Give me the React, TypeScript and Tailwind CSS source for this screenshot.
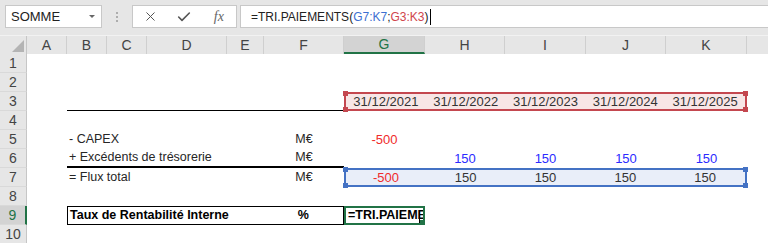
import { X, Check } from "lucide-react";

const headers = [
  { label: "A", cls: "w-[40px]" },
  { label: "B", cls: "w-[40px]" },
  { label: "C", cls: "w-[40px]" },
  { label: "D", cls: "w-[80px]" },
  { label: "E", cls: "w-[37px]" },
  { label: "F", cls: "w-[80px]" },
  { label: "G", cls: "w-[81px]", active: true },
  { label: "H", cls: "w-[80px]" },
  { label: "I", cls: "w-[81px]" },
  { label: "J", cls: "w-[80px]" },
  { label: "K", cls: "w-[81px]" },
];

const dates = ["31/12/2021", "31/12/2022", "31/12/2023", "31/12/2024", "31/12/2025"];

function Row({ n, active, children }: { n: number; active?: boolean; children?: React.ReactNode }) {
  return (
    <div className="flex h-[19px]">
      <div
        className={`flex w-[27px] shrink-0 items-center justify-center border-b border-[#d9d9d9] text-[14px] ${
          active
            ? "border-r-2 border-r-[#217346] bg-[#d3d3d3] text-[#217346]"
            : "border-r border-r-[#c6c6c6] bg-[#e6e6e6] text-[#444]"
        }`}
      >
        {n}
      </div>
      {children}
    </div>
  );
}

function Handles({ color }: { color: string }) {
  return (
    <>
      <span className={`absolute -left-[3px] -top-[3px] size-[5px] ${color}`} />
      <span className={`absolute -right-[3px] -top-[3px] size-[5px] ${color}`} />
      <span className={`absolute -bottom-[3px] -left-[3px] size-[5px] ${color}`} />
      <span className={`absolute -bottom-[3px] -right-[3px] size-[5px] ${color}`} />
    </>
  );
}

function Label({ text, unit, bold }: { text: string; unit: string; bold?: boolean }) {
  return (
    <>
      <div className={`flex w-[197px] items-center pl-[2px] text-[12.5px] ${bold ? "font-bold" : ""}`}>{text}</div>
      <div className={`flex w-[80px] items-center justify-center text-[12.5px] ${bold ? "font-bold" : ""}`}>{unit}</div>
    </>
  );
}

export default function App() {
  return (
    <div className="h-[243px] w-[768px] overflow-hidden bg-white" style={{ fontFamily: '"Liberation Sans", Arial, sans-serif' }}>
      {/* formula bar */}
      <div className="flex h-[36px] items-start border-b border-[#f2f2f2] bg-[#e6e6e6] pt-[5px]">
        <div className="ml-[5px] flex h-[23px] w-[97px] items-center justify-between border border-[#c8c8c8] bg-white pl-[5px] pr-[6px] text-[13px] text-[#222]">
          <span>SOMME</span>
          <span className="h-0 w-0 border-x-[3px] border-t-[3px] border-x-transparent border-t-[#666]" />
        </div>
        <div className="flex h-[23px] w-[30px] flex-col items-center justify-center gap-[2px]">
          <span className="size-[2px] rounded-full bg-[#9a9a9a]" />
          <span className="size-[2px] rounded-full bg-[#9a9a9a]" />
          <span className="size-[2px] rounded-full bg-[#9a9a9a]" />
        </div>
        <div className="flex h-[23px] w-[105px] items-center border border-[#c8c8c8] bg-white text-[#555]">
          <div className="flex w-[35px] justify-center">
            <X size={15} strokeWidth={1.6} />
          </div>
          <div className="flex w-[35px] justify-center">
            <Check size={16} strokeWidth={2.4} />
          </div>
          <div className="flex w-[35px] justify-center text-[14px] italic text-[#666]" style={{ fontFamily: '"Liberation Serif", serif' }}>
            fx
          </div>
        </div>
        <div className="ml-[3px] flex h-[23px] flex-1 items-center border-y border-l border-[#c8c8c8] bg-white pl-[10px] text-[12px] text-[#222]">
          <span>=TRI.PAIEMENTS(</span>
          <span className="text-[#3d6fd1]">G7:K7</span>
          <span>;</span>
          <span className="text-[#d0454c]">G3:K3</span>
          <span>)</span>
          <span className="ml-[1px] h-[16px] w-px bg-black" />
        </div>
      </div>

      {/* column headers */}
      <div className="flex h-[18px] bg-[#e6e6e6] text-[14px] text-[#444]">
        <div className="relative w-[27px] shrink-0 border-r border-[#c6c6c6]">
          <svg className="absolute bottom-[2px] right-[2px]" width="12" height="12" viewBox="0 0 12 12">
            <polygon points="12,0 12,12 0,12" fill="#b4b4b4" />
          </svg>
        </div>
        {headers.map((h) => (
          <div
            key={h.label}
            className={`flex shrink-0 items-center justify-center border-r border-[#cfcfcf] ${h.cls} ${
              h.active ? "border-b-2 border-b-[#217346] bg-[#d3d3d3] text-[#217346]" : ""
            }`}
          >
            {h.label}
          </div>
        ))}
        <div className="flex-1" />
      </div>

      {/* sheet */}
      <div className="text-[13px] text-[#262626]">
        <Row n={1} />
        <Row n={2} />
        <Row n={3}>
          <div className="w-[40px]" />
          <div className="w-[277px] border-b border-black" />
          <div className="relative flex w-[403px] border-2 border-[#c4474f] bg-[#f8e6e6] text-[#333]">
            {dates.map((d) => (
              <div key={d} className="flex flex-1 items-center justify-center">
                {d}
              </div>
            ))}
            <Handles color="bg-[#c4474f]" />
          </div>
        </Row>
        <Row n={4} />
        <Row n={5}>
          <div className="w-[40px]" />
          <Label text="- CAPEX" unit="M€" />
          <div className="flex w-[81px] items-center justify-center text-[#f02b2b]">-500</div>
        </Row>
        <Row n={6}>
          <div className="w-[40px]" />
          <div className="flex w-[277px] border-b-2 border-black">
            <Label text="+ Excédents de trésorerie" unit="M€" />
          </div>
          <div className="w-[81px]" />
          {["w-[80px]", "w-[81px]", "w-[80px]", "w-[81px]"].map((w, i) => (
            <div key={i} className={`flex items-center justify-center text-[#2b2bff] ${w}`}>
              150
            </div>
          ))}
        </Row>
        <Row n={7}>
          <div className="w-[40px]" />
          <Label text="= Flux total" unit="M€" />
          <div className="relative flex w-[403px] border-2 border-[#4472c4] bg-[#e9eef9] text-[#333]">
            <div className="flex flex-1 items-center justify-center text-[#f02b2b]">-500</div>
            <div className="flex flex-1 items-center justify-center">150</div>
            <div className="flex flex-1 items-center justify-center">150</div>
            <div className="flex flex-1 items-center justify-center">150</div>
            <div className="flex flex-1 items-center justify-center">150</div>
            <Handles color="bg-[#4472c4]" />
          </div>
        </Row>
        <Row n={8} />
        <Row n={9} active>
          <div className="w-[40px]" />
          <div className="flex w-[277px] border border-black text-black">
            <Label text="Taux de Rentabilité Interne" unit="%" bold />
          </div>
          <div className="relative flex w-[81px] items-center overflow-hidden whitespace-nowrap border-2 border-[#217346] pl-[2px] text-[12.5px] font-bold text-black">
            <span>=TRI.PAIEME</span>
            <span className="absolute right-[3px] top-[2px] h-[13px] w-px bg-black" />
            <span className="absolute bottom-0 right-0 size-[3px] bg-[#217346]" />
          </div>
        </Row>
        <Row n={10} />
      </div>
    </div>
  );
}
